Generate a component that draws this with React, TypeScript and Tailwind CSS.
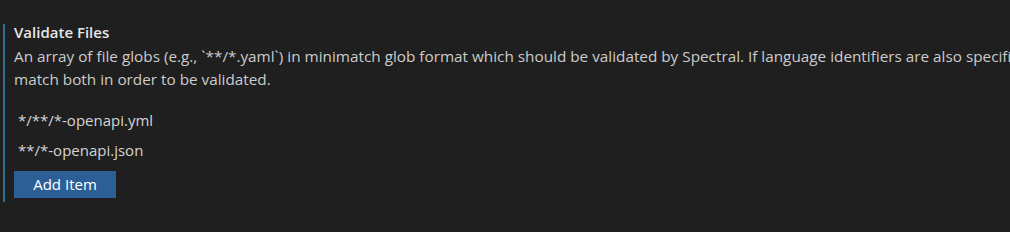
export default function App() {
    const items = ['*/**/*-openapi.yml', '**/*-openapi.json'];

    return (
        <div className="w-[1010px] h-[232px] overflow-hidden bg-[#1f1f1f] pt-[22px] font-['Segoe_UI','Open_Sans',sans-serif] text-[15px]">
            {/* Setting row, focused */}
            <div className="flex w-[1300px]">
                <div className="ml-[3px] mt-[2px] w-[2px] bg-[#2f6f8f]" />
                <div className="pl-[9px] pb-[4px]">
                    <div className="font-semibold text-[#e6e6e6] leading-[20px]">Validate Files</div>
                    <div className="mt-[3px] text-[#cccccc] text-[15.3px] leading-[23px] w-[1180px]">
                        An array of file globs (e.g., `**/*.yaml`) in minimatch glob format which should be validated by Spectral. If language identifiers are also specified, the file must
                        <br />
                        match both in order to be validated.
                    </div>

                    {/* String list */}
                    <div className="mt-[14px] flex flex-col">
                        {items.map((item) => (
                            <div key={item} className="h-[30px] flex items-center pl-[4px] text-[#d4d4d4]">
                                {item}
                            </div>
                        ))}
                    </div>

                    <button className="mt-[6px] h-[27px] w-[102px] bg-[#2b5f95] text-white text-[15px] leading-none pl-[2px] pr-[2px]">
                        Add Item
                    </button>
                </div>
            </div>
        </div>
    );
}
